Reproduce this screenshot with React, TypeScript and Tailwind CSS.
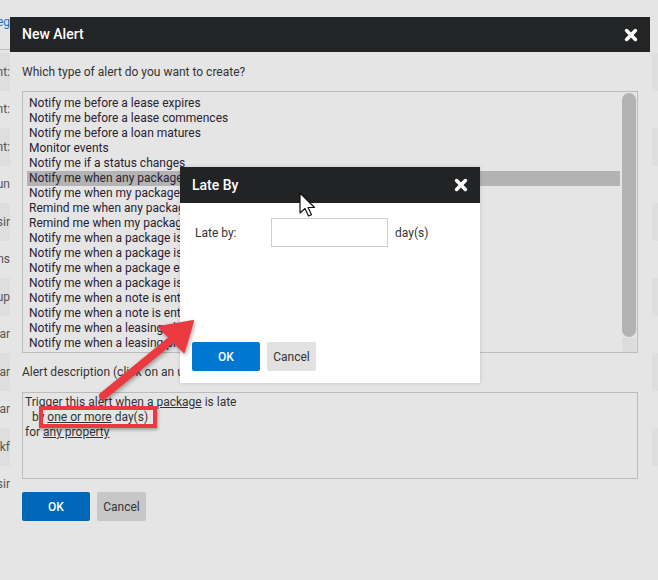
import { useState } from "react";

const alertTypes = [
  "Notify me before a lease expires",
  "Notify me before a lease commences",
  "Notify me before a loan matures",
  "Monitor events",
  "Notify me if a status changes",
  "Notify me when any package is late",
  "Notify me when my package is late",
  "Remind me when any package is due",
  "Remind me when my package is due",
  "Notify me when a package is submitted",
  "Notify me when a package is approved",
  "Notify me when a package expires",
  "Notify me when a package is rejected",
  "Notify me when a note is entered on a package",
  "Notify me when a note is entered on a property",
  "Notify me when a leasing plan changes",
  "Notify me when a leasing plan is approved",
];

// bits of the page behind the modal
const stripRows = ["nt:", "nt:", "nt:", "un", "sir", "ns", "up", "ar", "ar", "ar", "kf", "sir"];

const CloseX = () => (
  <svg width="14" height="14" viewBox="0 0 14 14">
    <path
      d="M2.6 2.6 L11.4 11.4 M11.4 2.6 L2.6 11.4"
      stroke="white"
      strokeWidth="3.6"
      strokeLinecap="round"
    />
  </svg>
);

const LeftStrip = () => (
  <div className="w-[10px] shrink-0 flex flex-col overflow-hidden text-[#555]">
    <div className="h-[53px] pt-[14px]">
      <div className="flex justify-end leading-[16px] text-[#1f6fbf] whitespace-nowrap">eg</div>
      <div className="mt-[19px] border-t border-dashed border-[#b9b9b9]" />
    </div>
    {stripRows.map((t, i) => (
      <div
        key={i}
        className={`h-[37.5px] flex items-center justify-end whitespace-nowrap ${
          i % 2 === 0 ? "bg-[#dedede]" : ""
        }`}
      >
        {t}
      </div>
    ))}
  </div>
);

const RightStrip = () => (
  <div className="w-[8px] shrink-0 flex flex-col pt-[53px] pl-[2px]">
    {stripRows.map((_, i) => (
      <div
        key={i}
        className={`h-[37.5px] rounded-l-[3px] ${i % 2 === 0 ? "bg-[#dedede]" : ""}`}
      />
    ))}
  </div>
);

const LateByDialog = () => (
  <div className="absolute left-[180px] top-[167px] w-[300px] h-[216px] bg-white flex flex-col shadow-[0_0_4px_rgba(0,0,0,0.15)]">
    <div className="h-[36px] bg-[#222324] flex items-center justify-between pl-[12px] pr-[12px]">
      <span className="text-white text-[14px] font-medium">Late By</span>
      <CloseX />
    </div>
    <div className="flex-1 pt-[15px] pl-[15px]">
      <div className="flex items-center">
        <span className="w-[76px]">Late by:</span>
        <input
          type="text"
          className="w-[117px] h-[29px] border border-[#cfcfcf] bg-white outline-none"
        />
        <span className="ml-[7px]">day(s)</span>
      </div>
    </div>
    <div className="flex gap-[7px] pl-[12px] pb-[12px]">
      <button className="w-[68px] h-[29px] rounded-[2px] bg-[#0077d0] text-white font-medium">
        OK
      </button>
      <button className="w-[49px] h-[29px] rounded-[2px] bg-[#e1e1e1] text-[#333]">
        Cancel
      </button>
    </div>
  </div>
);

const RedArrow = () => (
  <svg
    className="absolute left-[90px] top-[310px] drop-shadow-[1px_2px_2px_rgba(0,0,0,0.35)]"
    width="120"
    height="100"
    viewBox="0 0 120 100"
  >
    <path d="M13 86 L80 31" stroke="#ea3a40" strokeWidth="8" strokeLinecap="round" />
    <path d="M103 11 L69 17 L94 42 Z" fill="#ea3a40" stroke="#ea3a40" strokeWidth="2" strokeLinejoin="round" />
  </svg>
);

const Cursor = () => (
  <svg className="absolute left-[299px] top-[192px]" width="18" height="26" viewBox="0 0 18 26">
    <path
      d="M1 1 L1 21 L6 16.5 L9.5 24 L12.5 22.7 L9 15.5 L15.5 15.5 Z"
      fill="white"
      stroke="#111"
      strokeWidth="1.2"
      strokeLinejoin="round"
    />
  </svg>
);

const App = () => {
  const [selected, setSelected] = useState(5);

  return (
    <div className="relative w-[658px] h-[580px] overflow-hidden bg-[#e5e5e5] font-['Roboto','Liberation_Sans',sans-serif] text-[12px] text-[#333]">
      <div className="flex h-full">
        <LeftStrip />

        {/* New Alert modal */}
        <div className="w-[640px] shrink-0 pt-[17px] flex flex-col">
          <div className="h-[35px] bg-[#232425] flex items-center justify-between pl-[12px] pr-[12px]">
            <span className="text-white text-[14px] font-medium">New Alert</span>
            <CloseX />
          </div>

          <div className="px-[12px]">
            <p className="pt-[12px] leading-[16px]">Which type of alert do you want to create?</p>

            <div className="mt-[11px] h-[262px] border border-[#bcbcbc] flex">
              <ul className="flex-1 pt-[4px] pl-[4px] overflow-hidden">
                {alertTypes.map((t, i) => (
                  <li
                    key={i}
                    onClick={() => setSelected(i)}
                    className={`h-[15px] leading-[15px] pl-[2px] whitespace-nowrap text-[#2a2230] ${
                      selected === i ? "bg-[#b3b3b3]" : ""
                    }`}
                  >
                    {t}
                  </li>
                ))}
              </ul>
              <div className="w-[17px] pl-[2px] pt-[1px] flex flex-col">
                <div className="h-[244px] w-[14px] rounded-full bg-[#b3b3b3]" />
                <div className="mt-[1px] h-[14px] w-[14px] rounded-b-[3px] bg-[#dcdcdc]" />
              </div>
            </div>

            <p className="mt-[11px] leading-[16px]">
              Alert description (click on an underlined value to change it):
            </p>

            <div className="mt-[12px] h-[87px] border border-[#bcbcbc] pt-[2px] pl-[2px] leading-[15px]">
              <div>
                Trigger this alert when a <span className="underline">package</span> is late
              </div>
              <div className="pl-[7px]">
                by <span className="underline">one or more</span> day(s)
              </div>
              <div>
                for <span className="underline">any property</span>
              </div>
            </div>

            <div className="mt-[13px] flex gap-[7px]">
              <button className="w-[68px] h-[29px] rounded-[2px] bg-[#0068b8] text-white font-medium">
                OK
              </button>
              <button className="w-[49px] h-[29px] rounded-[2px] bg-[#c7c7c7] text-[#333]">
                Cancel
              </button>
            </div>
          </div>
        </div>

        <RightStrip />
      </div>

      <LateByDialog />

      {/* annotation */}
      <div className="absolute left-[39px] top-[406px] w-[118px] h-[22px] border-4 border-[#ea3a40] shadow-[1px_2px_3px_rgba(0,0,0,0.3)]" />
      <RedArrow />
      <Cursor />
    </div>
  );
};

export default App;
